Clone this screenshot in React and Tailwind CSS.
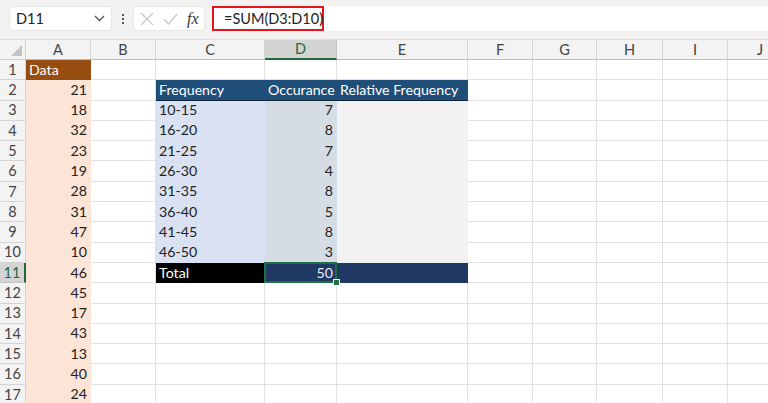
import React from 'react';

const cols = [
  { key: 'A', w: 65 },
  { key: 'B', w: 65 },
  { key: 'C', w: 109 },
  { key: 'D', w: 72 },
  { key: 'E', w: 131 },
  { key: 'F', w: 65 },
  { key: 'G', w: 64 },
  { key: 'H', w: 66 },
  { key: 'I', w: 65 },
  { key: 'J', w: 65 },
];

const dataA = [null, 21, 18, 32, 23, 19, 28, 31, 47, 10, 46, 45, 17, 43, 13, 40, 24];
const freq = ['10-15', '16-20', '21-25', '26-30', '31-35', '36-40', '41-45', '46-50'];
const occ = [7, 8, 7, 4, 8, 5, 8, 3];

function cellFor(row, col) {
  if (col === 'A') {
    if (row === 1) return { text: 'Data', cls: 'bg-[#974c10] border-[#974c10] text-white', align: 'left' };
    return { text: dataA[row - 1], cls: 'bg-[#fce4d6] border-[#fce4d6] text-[#222]', align: 'right' };
  }
  if (row === 2 && (col === 'C' || col === 'D' || col === 'E')) {
    const t = { C: 'Frequency', D: 'Occurance', E: 'Relative Frequency' }[col];
    return { text: t, cls: 'bg-[#1f4e78] border-r-[#1f4e78] border-b-[#0e2236] text-white', align: 'left' };
  }
  if (row >= 3 && row <= 10) {
    if (col === 'C') return { text: freq[row - 3], cls: 'bg-[#d9e1f2] border-[#d9e1f2] text-[#222]', align: 'left' };
    if (col === 'D') return { text: occ[row - 3], cls: 'bg-[#d6dce4] border-[#d6dce4] text-[#222]', align: 'right' };
    if (col === 'E') return { text: '', cls: 'bg-[#f2f2f2] border-[#f2f2f2]', align: 'left' };
  }
  if (row === 11) {
    if (col === 'C') return { text: 'Total', cls: 'bg-black border-black text-white', align: 'left' };
    if (col === 'D') return { text: '50', cls: 'bg-[#203864] border-[#203864] text-[#e8ecf4]', align: 'right', selected: true };
    if (col === 'E') return { text: '', cls: 'bg-[#203864] border-[#203864]', align: 'left' };
  }
  return { text: '', cls: 'bg-white border-[#e1e1e1]', align: 'left' };
}

function Row({ row }) {
  const active = row === 11;
  return (
    <div className="flex h-[20.3px]">
      <div
        className={
          'w-[26px] shrink-0 flex items-center justify-center border-b border-r text-[14.5px] ' +
          (active
            ? 'bg-[#d4d4d4] text-[#1d6b3c] border-b-[#c6c6c6] border-r-2 border-r-[#1d6b3c]'
            : 'bg-[#f3f3f3] text-[#444] border-[#d4d4d4]')
        }
      >
        {row}
      </div>
      {cols.map((c) => {
        const cell = cellFor(row, c.key);
        return (
          <div
            key={c.key}
            style={{ width: c.w }}
            className={
              'relative shrink-0 border-r border-b flex items-center px-[3px] text-[14.2px] leading-none whitespace-nowrap ' +
              cell.cls +
              (cell.align === 'right' ? ' justify-end' : '') +
              (cell.selected ? ' z-10' : '')
            }
          >
            {cell.text}
            {cell.selected && (
              <>
                <div className="absolute -left-px -top-px -right-px -bottom-px border-2 border-[#1e7145]"></div>
                <div className="absolute -right-[4px] -bottom-[4px] w-[7px] h-[7px] bg-[#1e7145] border border-white"></div>
              </>
            )}
          </div>
        );
      })}
    </div>
  );
}

export default function App() {
  const rows = Array.from({ length: 17 }, (_, i) => i + 1);
  return (
    <div
      className="w-[768px] h-[403px] overflow-hidden bg-white text-[#222]"
      style={{ fontFamily: 'Lato, "Open Sans", sans-serif' }}
    >
      {/* formula bar */}
      <div className="h-[40px] bg-[#f3f2f1] flex items-start pt-[6px] pl-[9px] border-b border-[#e2e0de]">
        <div className="w-[103px] h-[25px] bg-white rounded-[4px] border border-[#e6e6e6] flex items-center justify-between pl-[6px] pr-[6px] text-[14.5px]">
          <span>D11</span>
          <svg width="11" height="7" viewBox="0 0 11 7" fill="none" stroke="#555" strokeWidth="1.3">
            <path d="M1 1l4.5 4.5L10 1" />
          </svg>
        </div>
        <div className="w-[21px] h-[25px] flex flex-col items-center justify-center gap-[2px]">
          <span className="w-[2px] h-[2px] bg-[#555]"></span>
          <span className="w-[2px] h-[2px] bg-[#555]"></span>
          <span className="w-[2px] h-[2px] bg-[#555]"></span>
        </div>
        <div className="w-[72px] h-[25px] bg-white rounded-[4px] border border-[#e6e6e6] flex items-center pl-[6px] gap-[9px]">
          <svg width="14" height="14" viewBox="0 0 14 14" fill="none" stroke="#c8c8c8" strokeWidth="1.3">
            <path d="M1 1l12 12M13 1L1 13" />
          </svg>
          <svg width="15" height="12" viewBox="0 0 15 12" fill="none" stroke="#c8c8c8" strokeWidth="1.3">
            <path d="M1 6l4.5 5L14 1" />
          </svg>
          <span
            className="text-[16px] italic text-[#333] leading-none"
            style={{ fontFamily: '"Liberation Serif", serif' }}
          >
            fx
          </span>
        </div>
        <div className="ml-[7px] flex-1 h-[25px] bg-white flex items-stretch">
          <div className="w-[112px] border-2 border-[#e8141b] flex items-center pl-[10px] text-[14.5px]">
            =SUM(D3:D10)
          </div>
        </div>
      </div>
      {/* column headers */}
      <div className="flex h-[20px] bg-[#f3f3f3]">
        <div className="w-[26px] shrink-0 relative border-r border-b border-[#cfcfcf]">
          <div
            className="absolute right-[3px] bottom-[3px] w-[11px] h-[11px] bg-[#c4c4c4]"
            style={{ clipPath: 'polygon(100% 0, 100% 100%, 0 100%)' }}
          ></div>
        </div>
        {cols.map((c) => (
          <div
            key={c.key}
            style={{ width: c.w }}
            className={
              'shrink-0 flex items-center justify-center text-[14.5px] border-r ' +
              (c.key === 'D'
                ? 'bg-[#d4d4d4] text-[#1d6b3c] border-r-[#c6c6c6] border-b-2 border-b-[#1d6b3c]'
                : 'text-[#444] border-[#d4d4d4] border-b border-b-[#bdbdbd]')
            }
          >
            {c.key}
          </div>
        ))}
      </div>
      {rows.map((r) => (
        <Row key={r} row={r} />
      ))}
    </div>
  );
}
